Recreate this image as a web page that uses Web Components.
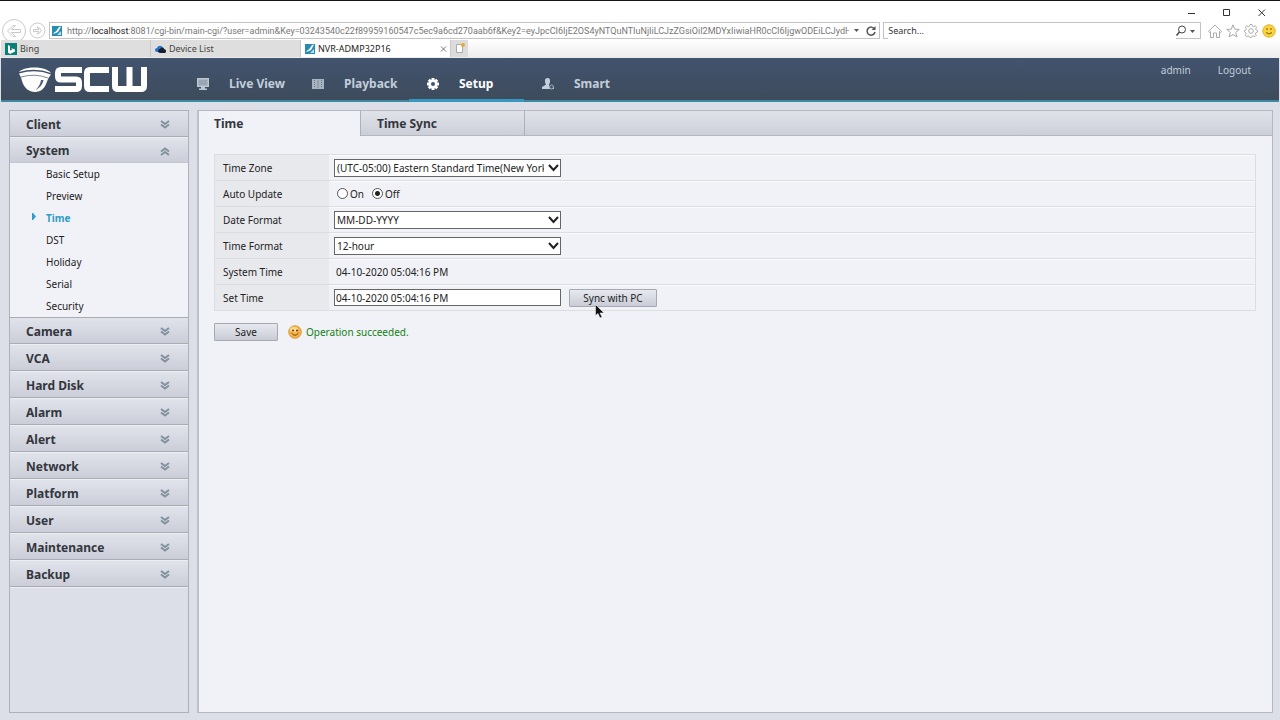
<!DOCTYPE html>
<html lang="en">
<head>
<meta charset="utf-8">
<title>NVR-ADMP32P16</title>
<style>
  html, body {
    height: 100%;
    margin: 0;
  }
  body {
    overflow: hidden;
    font-family: "Noto Sans", "Open Sans", sans-serif;
    font-size: 10px;
    line-height: 16px;
    color: #222;
  }
</style>
</head>
<body>
<nvr-app></nvr-app>
<script>
class BaseElement extends HTMLElement {
  constructor() {
    super();
    this.attachShadow({ mode: "open" });
  }

  connectedCallback() {
    this.render();
  }

  render() {
    const template = document.createElement("template");
    template.innerHTML = this.getStyle() + this.getTemplate();
    this.shadowRoot.innerHTML = "";
    this.shadowRoot.appendChild(template.content.cloneNode(true));
  }
}

// page icon shared by the address bar and the active tab
const siteIcon = /* HTML */ `
  <svg width="10" height="10" viewBox="0 0 10 10" aria-hidden="true">
    <rect width="10" height="10" fill="#278db0"/>
    <path d="M1 8C2 6 4 6 5 4L7 1l2-.5-1 2L6 6 4 7z" fill="#fff"/>
    <path d="M5 9l4-4v4z" fill="#bce0eb"/>
  </svg>`;

class BrowserChrome extends BaseElement {
  getStyle() {
    return /* CSS */ `
    <style>
    :host {
      display: block;
      flex: none;
      background: #fff;
      border-top: 1px solid #17131a;
      color: #555;
    }
    button {
      display: flex;
      align-items: center;
      justify-content: center;
      padding: 0;
      border: 0;
      background: none;
    }
    .window {
      display: flex;
      justify-content: flex-end;
      gap: 15px;
      height: 21px;
      padding-right: 8px;
    }
    .window button {
      width: 20px;
      height: 23px;
    }
    .bar {
      display: flex;
      align-items: center;
      height: 17px;
      gap: 3px;
      padding: 0 4px 0 2px;
    }
    .bar svg {
      flex: none;
    }
    .address,
    .search {
      display: flex;
      align-items: center;
      box-sizing: border-box;
      min-width: 0;
      height: 17px;
      border: 1px solid #c3c3c3;
    }
    .address {
      flex: 826 1 0;
      gap: 5px;
      padding: 0 2px;
    }
    .url {
      flex: 1;
      min-width: 0;
      overflow: hidden;
      white-space: nowrap;
      font-family: Roboto, "Noto Sans", sans-serif;
      font-size: 9px;
      color: #777;
    }
    .url b {
      font-weight: 400;
      color: #222;
    }
    .search {
      flex: 308 1 0;
      padding: 0 4px;
    }
    .search input {
      flex: 1;
      min-width: 0;
      padding: 0;
      border: 0;
      outline: 0;
      font: inherit;
      font-size: 9px;
    }
    .search input::placeholder {
      color: #333;
    }
    .tools {
      display: flex;
      gap: 4px;
      padding-left: 4px;
    }
    .tabs {
      display: flex;
      height: 17px;
      margin-top: 1px;
      padding-bottom: 1px;
      padding-left: 1px;
      background: linear-gradient(#fff, #ececec);
      font-size: 9px;
    }
    .tab {
      display: flex;
      align-items: center;
      gap: 3px;
      box-sizing: border-box;
      width: 150px;
      padding-left: 4px;
      border-right: 1px solid #c8c8c8;
      background: #dedede;
      color: #444;
      text-decoration: none;
    }
    .tab.active {
      background: #fff;
      color: #222;
    }
    .close {
      margin-left: auto;
      width: 12px;
    }
    .new {
      width: 17px;
      background: #dcdcdc;
    }
    </style>`;
  }

  getTemplate() {
    return /* HTML */ `
    <div class="window">
      <button aria-label="Minimize"><svg width="8" height="8" viewBox="0 0 8 8"><path d="M0 4.500h7" stroke="#333"/></svg></button>
      <button aria-label="Maximize"><svg width="8" height="8" viewBox="0 0 8 8"><path d="M.5.5h6v6h-6z" fill="none" stroke="#333"/></svg></button>
      <button aria-label="Close"><svg width="8" height="8" viewBox="0 0 8 8"><path d="M.5.500l6.500 6.500M7 .5L.5 7" stroke="#333"/></svg></button>
    </div>
    <div class="bar">
      <button aria-label="Back">
        <svg width="24" height="24" viewBox="0 0 24 24" fill="none" stroke="#c9c9c9">
          <circle cx="12" cy="12" r="11.500"/>
          <path d="M5.500 12L11 6.500h2.500L9.500 10.500h9v3h-9l4 4H11z"/>
        </svg>
      </button>
      <button aria-label="Forward">
        <svg width="17" height="17" viewBox="0 0 17 17" fill="none" stroke="#c9c9c9">
          <circle cx="8.500" cy="8.500" r="7.500"/>
          <path d="M12.500 8.500L9.500 5H8l2 2.500H4.500v2H10L8 12h1.500z"/>
        </svg>
      </button>
      <div class="address">
        ${siteIcon}
        <span class="url">http://<b>localhost</b>:8081/cgi-bin/main-cgi/?user=admin&amp;Key=03243540c22f89959160547c5ec9a6cd270aab6f&amp;Key2=eyJpcCI6IjE2OS4yNTQuNTIuNjIiLCJzZGsiOiI2MDYxIiwiaHR0cCI6IjgwODEiLCJydH</span>
        <svg width="6" height="4" viewBox="0 0 6 4"><path d="M0 0h5L2.500 3z" fill="#555"/></svg>
        <button aria-label="Refresh">
          <svg width="12" height="12" viewBox="0 0 12 12"><path d="M9.500 4A4 4 0 1 0 10 7" fill="none" stroke="#555" stroke-width="1.500"/><path d="M10.500 1v4h-4z" fill="#555"/></svg>
        </button>
      </div>
      <div class="search">
        <input type="text" placeholder="Search..." aria-label="Search">
        <button aria-label="Go">
          <svg width="20" height="12" viewBox="0 0 20 12"><circle cx="6" cy="4.500" r="3.500" fill="none" stroke="#444"/><path d="M3.500 7L.5 10.500" stroke="#444" stroke-width="1.500"/><path d="M14 5h5l-2.500 3z" fill="#555"/></svg>
        </button>
      </div>
      <div class="tools">
        <svg width="14" height="14" viewBox="0 0 14 14" fill="none" stroke="#aaa"><path d="M.5 7.500L7 1l6.500 6.500-1 1-1-1v6H8.500V9h-3v4.500h-3v-6l-1 1z"/></svg>
        <svg width="14" height="14" viewBox="0 0 14 14" fill="none" stroke="#aaa"><path d="M7 .8l1.700 4.400 4.600.2-3.600 3 1.200 4.600L7 10.500 3.100 13l1.200-4.600-3.600-3 4.600-.2z"/></svg>
        <svg width="14" height="14" viewBox="0 0 14 14" fill="none" stroke="#aaa"><path d="M6 .5h2l.4 1.700 1.300.6 1.500-1 1.400 1.400-.9 1.500.5 1.300 1.300.5v1.500l-1.600.7-.5 1.200.8 1.500-1.300 1.300-1.500-.9-1.400.6-.5 1.300H6l-.6-1.300-1.300-.6-1.500.9-1.200-1.300.8-1.500-.5-1.200L.5 8V6.500l1.300-.5.5-1.300-.9-1.500L2.800 1.800l1.500 1 1.200-.6z"/><circle cx="7" cy="7" r="2.300"/></svg>
        <svg width="14" height="14" viewBox="0 0 14 14"><circle cx="7" cy="7" r="6.200" fill="#fbd33c" stroke="#dfb12a"/><path d="M4 8.500q3 3 6 0" fill="none" stroke="#765b12"/><path d="M4.500 4h1v2h-1zM8.500 4h1v2h-1z" fill="#765b12"/></svg>
      </div>
    </div>
    <nav class="tabs" aria-label="Tabs">
      <a class="tab" href="#">
        <svg width="12" height="12" viewBox="0 0 12 12"><rect width="12" height="12" fill="#087f78"/><path d="M3 2l2 1v4.500l2.500-1L6 5l4 1.500v2L5 11 3 9.500z" fill="#fff"/></svg>
        Bing
      </a>
      <a class="tab" href="#">
        <svg width="11" height="10" viewBox="0 0 11 10"><path d="M0 6c0-2 2-2 2-2 1-3 5-3 6 0L5 8H2C1 8 0 7 0 6z" fill="#2c75cc"/><path d="M3 7c0-2 2-2 2-2 1-2 4-2 4 0 2 0 3 3 1 4H5C4 9 3 8 3 7z" fill="#17202c"/></svg>
        Device List
      </a>
      <a class="tab active" href="#">
        ${siteIcon}
        NVR-ADMP32P16
        <svg class="close" width="12" height="6" viewBox="0 0 12 6"><path d="M3 .5l5 5M8 .5l-5 5" stroke="#777"/></svg>
      </a>
      <button class="new" aria-label="New tab">
        <svg width="10" height="11" viewBox="0 0 10 11"><path d="M1.500 1.500h6v8h-6z" fill="#fff" stroke="#aaa"/><circle cx="8" cy="2" r="2" fill="#efa72d"/></svg>
      </button>
    </nav>`;
  }
}

class AppHeader extends BaseElement {
  getStyle() {
    return /* CSS */ `
    <style>
    :host {
      display: flex;
      flex: none;
      box-sizing: border-box;
      height: 44px;
      border-bottom: 2px solid #3d88a2;
      background: linear-gradient(#42536e, #3d4b5b);
      color: #c3cedb;
    }
    .logo {
      width: 178px;
      padding: 9px 0 0 17px;
      box-sizing: border-box;
    }
    nav {
      display: flex;
      flex: 1;
    }
    nav a {
      display: flex;
      align-items: center;
      box-sizing: border-box;
      width: 115px;
      height: 44px;
      gap: 19px;
      padding: 11px 0 0 17px;
      border-bottom: 3px solid transparent;
      color: inherit;
      font-size: 12px;
      font-weight: 700;
      text-decoration: none;
      white-space: nowrap;
    }
    nav a[aria-current] {
      border-color: #3598bf;
      color: #fff;
    }
    nav svg {
      flex: none;
    }
    .user {
      display: flex;
      gap: 27px;
      padding: 4px 28px 0 0;
    }
    .user a {
      color: inherit;
      text-decoration: none;
    }
    </style>`;
  }

  getTemplate() {
    return /* HTML */ `
    <svg class="logo" width="178" height="42" viewBox="17 0 161 33" preserveAspectRatio="xMinYMin" role="img" aria-label="SCW">
      <path d="M18 5C24-1 44-1 50 6Q34 0 18 5z" fill="#fff"/>
      <path d="M18 6.500Q35 1.500 50 7.500L47.500 11 46 14.500C44 21 40 25 34 25S23 21 21 14L20 10.500z" fill="#fff"/>
      <path d="M20 10Q34 6 47 11" fill="none" stroke="#5b6b82" stroke-width=".8"/>
      <path d="M42.500 13c-1 5-4 8-8 10 3-3 5-6 5.500-10z" fill="#4f5f78"/>
      <path d="M81 3H60q-3 0-3 3v3.500q0 3 3 3h15q3 0 3 3V19q0 3-3 3H54M108 3H89q-3 0-3 3v13q0 3 3 3h19M114 0v19q0 3 3 3h23q3 0 3-3V0M128.500 0v22" fill="none" stroke="#fff" stroke-width="6"/>
    </svg>
    <nav>
      <a href="#">
        <svg width="14" height="14" viewBox="0 0 14 14"><path d="M1 1h12v9H1z" fill="#bcc6d1"/><path d="M2.500 2.500h9v6h-9z" fill="#98a6b6"/><path d="M5 10h4v1.500h2V13H3v-1.500h2z" fill="#bcc6d1"/></svg>
        Live View
      </a>
      <a href="#">
        <svg width="14" height="14" viewBox="0 0 14 14"><path d="M1 2h12v10H1z" fill="#a9b4c1"/><path d="M3.500 3v8M10.500 3v8" stroke="#6b7b8e" stroke-dasharray="1 1"/><path d="M7 3v8" stroke="#7f8d9e"/></svg>
        Playback
      </a>
      <a href="#" aria-current="page">
        <svg width="14" height="14" viewBox="0 0 14 14"><g stroke="#fff" stroke-width="3"><path d="M7 1v12M1 7h12M2.800 2.800l8.400 8.400M11.200 2.800l-8.400 8.400"/></g><circle cx="7" cy="7" r="4.500" fill="#fff"/><circle cx="7" cy="7" r="2" fill="#43546a"/></svg>
        Setup
      </a>
      <a href="#">
        <svg width="14" height="14" viewBox="0 0 14 14"><path d="M4 3q0-2 2.500-2T9 3v2.500L8 7.500V9h5v3H1v-2l4-2.500-1-2z" fill="#c3cedb"/><circle cx="10.500" cy="10" r="2" fill="#445367" stroke="#9eabba"/></svg>
        Smart
      </a>
    </nav>
    <div class="user"><a href="#">admin</a><a href="#">Logout</a></div>`;
  }
}

class MenuSection extends BaseElement {
  getStyle() {
    return /* CSS */ `
    <style>
    :host {
      display: block;
      background: #f1f2f7;
    }
    button {
      display: flex;
      align-items: center;
      justify-content: space-between;
      box-sizing: border-box;
      width: 100%;
      height: 26px;
      padding: 2px 18px 0 16px;
      border: 0;
      border-bottom: 1px solid #a9acb3;
      background: linear-gradient(#e0e3ea, #cbced8);
      font: inherit;
      font-size: 12px;
      font-weight: 700;
      color: #33363d;
    }
    :host([open]) button {
      height: 25px;
      border-bottom-color: #c6c8ce;
    }
    .gap {
      height: 1px;
      background: #eceef1;
    }
    </style>`;
  }

  getTemplate() {
    const chevrons = this.hasAttribute("open")
      ? "M1 4.500L5 1.500l4 3M1 8l4-3 4 3"
      : "M1 1l4 3 4-3M1 4.500l4 3 4-3";
    return /* HTML */ `
    <button aria-expanded="${this.hasAttribute("open")}">
      ${this.getAttribute("label")}
      <svg width="10" height="9" viewBox="0 0 10 9"><path d="${chevrons}" fill="none" stroke="#8290a0" stroke-width="2"/></svg>
    </button>
    ${this.hasAttribute("open") ? "<slot></slot>" : "<div class=\"gap\"></div>"}`;
  }
}

class SideMenu extends BaseElement {
  getStyle() {
    return /* CSS */ `
    <style>
    :host {
      display: block;
      flex: none;
      box-sizing: border-box;
      width: 180px;
      border: 1px solid #adb0b8;
      background: #dcdfe8;
    }
    ul {
      margin: 0;
      padding: 0;
      list-style: none;
      border-bottom: 1px solid #a9acb3;
    }
    li {
      display: flex;
      align-items: center;
      height: 22px;
      padding-left: 22px;
      gap: 9px;
    }
    li svg {
      flex: none;
      visibility: hidden;
    }
    a {
      color: #222;
      text-decoration: none;
    }
    .current svg {
      visibility: visible;
    }
    .current a {
      color: #2f9dc4;
      font-weight: 700;
    }
    </style>`;
  }

  getTemplate() {
    const pages = ["Basic Setup", "Preview", "Time", "DST", "Holiday", "Serial", "Security"];
    const rest = ["Camera", "VCA", "Hard Disk", "Alarm", "Alert", "Network", "Platform", "User", "Maintenance", "Backup"];
    const items = pages.map((page) => /* HTML */ `
      <li class="${page === "Time" ? "current" : ""}">
        <svg width="5" height="10" viewBox="0 0 5 10"><path d="M0 0h1l3 3.500L1 7H0z" fill="#2f9dc4"/></svg>
        <a href="#">${page}</a>
      </li>`).join("");
    return /* HTML */ `
    <menu-section label="Client"></menu-section>
    <menu-section label="System" open><ul>${items}</ul></menu-section>
    ${rest.map((label) => `<menu-section label="${label}"></menu-section>`).join("")}`;
  }
}

class FormRow extends BaseElement {
  getStyle() {
    return /* CSS */ `
    <style>
    :host {
      display: flex;
      box-sizing: border-box;
      height: 26px;
      border-bottom: 1px solid #dcdde1;
      box-shadow: inset 0 1px #fbfbfd;
    }
    .label {
      display: flex;
      align-items: center;
      box-sizing: border-box;
      width: 114px;
      padding-left: 8px;
      background: #e8e9ed;
    }
    .value {
      display: flex;
      align-items: center;
      padding-left: 5px;
    }
    </style>`;
  }

  getTemplate() {
    return /* HTML */ `
    <div class="label"><slot name="label"></slot></div>
    <div class="value"><slot></slot></div>`;
  }
}

class TimePanel extends BaseElement {
  getStyle() {
    return /* CSS */ `
    <style>
    :host {
      display: block;
      flex: 1;
      min-width: 0;
      box-sizing: border-box;
      border: 1px solid #b5b8be;
      border-left: 2px solid #bfc1c8;
      background: #f1f2f7;
    }
    .tabs {
      display: flex;
      height: 25px;
      background: linear-gradient(#e0e3ea, #cbced6);
    }
    .tabs a {
      box-sizing: border-box;
      width: 164px;
      padding: 5px 16px 0;
      border-right: 1px solid #adb0b8;
      border-bottom: 1px solid #b5b8be;
      color: #343740;
      font-size: 12px;
      font-weight: 700;
      text-decoration: none;
    }
    .tabs a.active {
      width: 162px;
      padding-left: 15px;
      border-bottom: 0;
      background: #f1f2f7;
    }
    .rest {
      flex: 1;
      border-bottom: 1px solid #b5b8be;
    }
    form {
      margin: 18px 16px 0 15px;
    }
    .rows {
      border: 1px solid #dcdde1;
      border-bottom: 0;
    }
    select,
    .text {
      box-sizing: border-box;
      width: 227px;
      height: 18px;
      margin: 0;
      border: 1px solid #666;
      border-radius: 0;
      background-color: #fff;
      font: inherit;
      color: #222;
    }
    select {
      appearance: none;
      padding: 0 16px 0 2px;
      background-image: url("data:image/svg+xml,%3Csvg xmlns='http://www.w3.org/2000/svg' width='11' height='8'%3E%3Cpath d='M1 1l4.500 5L10 1' fill='none' stroke='%23222' stroke-width='2'/%3E%3C/svg%3E");
      background-repeat: no-repeat;
      background-position: right 1px center;
    }
    .text {
      height: 17px;
      padding: 0 1px;
    }
    .radio {
      display: flex;
      align-items: center;
      gap: 2px;
      margin: 0 5px 0 3px;
    }
    .radio input {
      appearance: none;
      box-sizing: border-box;
      width: 11px;
      height: 11px;
      margin: 0;
      border: 1px solid #555;
      border-radius: 50%;
      background: #fff;
    }
    .radio input:checked {
      background: radial-gradient(#222 0 2px, #fff 3px);
    }
    output {
      padding-left: 2px;
    }
    button {
      box-sizing: border-box;
      height: 18px;
      padding: 0 13px;
      border: 1px solid #a6a9b0;
      border-radius: 1px;
      background: linear-gradient(#e7e9f0, #c9ccd6);
      font: inherit;
      line-height: 16px;
      color: #222;
    }
    .sync {
      position: relative;
      min-width: 88px;
      margin-left: 8px;
    }
    /* pointer resting over the button's lower edge */
    .pointer {
      position: absolute;
      left: 25px;
      top: 14px;
    }
    .actions {
      display: flex;
      align-items: center;
      margin-top: 12px;
    }
    .save {
      width: 64px;
    }
    .status {
      display: flex;
      align-items: center;
      gap: 4px;
      margin-left: 10px;
      color: #138013;
    }
    </style>`;
  }

  getTemplate() {
    return /* HTML */ `
    <nav class="tabs">
      <a class="active" href="#">Time</a>
      <a href="#">Time Sync</a>
      <span class="rest"></span>
    </nav>
    <form>
      <div class="rows">
        <form-row>
          <label slot="label" for="zone">Time Zone</label>
          <select id="zone"><option>(UTC-05:00) Eastern Standard Time(New York)</option></select>
        </form-row>
        <form-row>
          <span slot="label">Auto Update</span>
          <label class="radio"><input type="radio" name="update">On</label>
          <label class="radio"><input type="radio" name="update" checked>Off</label>
        </form-row>
        <form-row>
          <label slot="label" for="date">Date Format</label>
          <select id="date"><option>MM-DD-YYYY</option></select>
        </form-row>
        <form-row>
          <label slot="label" for="format">Time Format</label>
          <select id="format"><option>12-hour</option></select>
        </form-row>
        <form-row>
          <label slot="label" for="system">System Time</label>
          <output id="system">04-10-2020 05:04:16 PM</output>
        </form-row>
        <form-row>
          <label slot="label" for="set">Set Time</label>
          <input class="text" id="set" type="text" value="04-10-2020 05:04:16 PM">
          <button class="sync" type="button">Sync with PC
            <svg class="pointer" width="10" height="15" viewBox="0 0 10 15"><path d="M.5.500v11l2.500-2 2 4.500 2-1-2-4h4z" fill="#111" stroke="#fff" stroke-width=".5"/></svg>
          </button>
        </form-row>
      </div>
      <div class="actions">
        <button class="save" type="button">Save</button>
        <span class="status" role="status">
          <svg width="14" height="14" viewBox="0 0 14 14"><circle cx="7" cy="7" r="6.300" fill="#f6b447" stroke="#d28c2e" stroke-width=".8"/><ellipse cx="6" cy="4.500" rx="4" ry="2.500" fill="#fcdc8c"/><path d="M3.500 8q3.500 4.500 7 0" fill="none" stroke="#7e4513"/><circle cx="5" cy="5.500" r="1" fill="#63360f"/><circle cx="9" cy="5.500" r="1" fill="#63360f"/></svg>
          Operation succeeded.
        </span>
      </div>
    </form>`;
  }
}

class NvrApp extends BaseElement {
  getStyle() {
    return /* CSS */ `
    <style>
    :host {
      display: flex;
      flex-direction: column;
      height: 100vh;
      background: #dcdfe7;
    }
    app-header {
      margin: 0 1px;
    }
    main {
      display: flex;
      flex: 1;
      min-height: 0;
      gap: 8px;
      padding: 8px 7px 7px 9px;
    }
    </style>`;
  }

  getTemplate() {
    return /* HTML */ `
    <browser-chrome></browser-chrome>
    <app-header></app-header>
    <main>
      <side-menu></side-menu>
      <time-panel></time-panel>
    </main>`;
  }
}

customElements.define("browser-chrome", BrowserChrome);
customElements.define("app-header", AppHeader);
customElements.define("menu-section", MenuSection);
customElements.define("side-menu", SideMenu);
customElements.define("form-row", FormRow);
customElements.define("time-panel", TimePanel);
customElements.define("nvr-app", NvrApp);
</script>
</body>
</html>
